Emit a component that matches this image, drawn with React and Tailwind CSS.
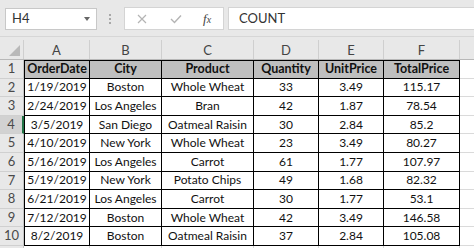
import React from "react";

const colW = ["w-[66px]", "w-[72px]", "w-[92px]", "w-[65px]", "w-[65px]", "w-[76px]"];
const letters = ["A", "B", "C", "D", "E", "F"];

const header = ["OrderDate", "City", "Product", "Quantity", "UnitPrice", "TotalPrice"];

const rows = [
  ["1/19/2019", "Boston", "Whole Wheat", "33", "3.49", "115.17"],
  ["2/24/2019", "Los Angeles", "Bran", "42", "1.87", "78.54"],
  ["3/5/2019", "San Diego", "Oatmeal Raisin", "30", "2.84", "85.2"],
  ["4/10/2019", "New York", "Whole Wheat", "23", "3.49", "80.27"],
  ["5/16/2019", "Los Angeles", "Carrot", "61", "1.77", "107.97"],
  ["5/19/2019", "New York", "Potato Chips", "49", "1.68", "82.32"],
  ["6/21/2019", "Los Angeles", "Carrot", "30", "1.77", "53.1"],
  ["7/12/2019", "Boston", "Whole Wheat", "42", "3.49", "146.58"],
  ["8/2/2019", "Boston", "Oatmeal Raisin", "37", "2.84", "105.08"],
];

const Toolbar = () => (
  <div className="h-[37px] bg-[#e8e8e8] flex items-start pt-[7px] border-b border-[#d6d6d6]">
    {/* name box */}
    <div className="ml-[5px] mt-[1px] w-[92px] h-[22px] bg-white border border-[#c8c8c8] flex items-center justify-between pl-[6px] pr-[6px]">
      <span className="text-[13px] text-[#333]">H4</span>
      <span className="w-0 h-0 border-l-[3.5px] border-r-[3.5px] border-t-[4px] border-l-transparent border-r-transparent border-t-[#666]" />
    </div>
    {/* grip dots */}
    <div className="ml-[12px] mt-[7px] flex flex-col gap-[2px]">
      <span className="w-[2px] h-[2px] bg-[#a8a8a8]" />
      <span className="w-[2px] h-[2px] bg-[#a8a8a8]" />
      <span className="w-[2px] h-[2px] bg-[#a8a8a8]" />
    </div>
    {/* x check fx */}
    <div className="ml-[13px] w-[100px] h-[23px] bg-white border border-[#d4d4d4] flex items-center">
      <svg className="ml-[12px]" width="10" height="10" viewBox="0 0 10 10">
        <path d="M1 1 L9 9 M9 1 L1 9" stroke="#b4b4b4" strokeWidth="1.2" fill="none" />
      </svg>
      <svg className="ml-[23px]" width="12" height="10" viewBox="0 0 12 10">
        <path d="M1 5 L4.5 8.5 L11 1.5" stroke="#b4b4b4" strokeWidth="1.4" fill="none" />
      </svg>
      <span className="ml-[21px] text-[13px] italic text-[#444] font-['Liberation_Serif',serif] leading-none">
        f<span className="text-[10px]">x</span>
      </span>
    </div>
    {/* formula */}
    <div className="ml-[4px] flex-1 h-[23px] bg-white border border-[#d4d4d4] border-r-0 flex items-center pl-[10px]">
      <span className="text-[13px] text-[#333]">COUNT</span>
    </div>
  </div>
);

const ColHeaders = () => (
  <div className="h-[20px] bg-[#e8e8e8] flex border-b border-[#b8b8b8]">
    <div className="w-[24px] h-full relative border-r border-[#cfcfcf]">
      <svg className="absolute right-[3px] bottom-[3px]" width="11" height="11" viewBox="0 0 11 11">
        <path d="M11 0 L11 11 L0 11 Z" fill="#b9b9b9" />
      </svg>
    </div>
    {letters.map((l, i) => (
      <div key={l} className={`${colW[i]} h-full flex items-center justify-center pt-[2px] text-[13px] text-[#444] border-r border-[#cfcfcf]`}>
        {l}
      </div>
    ))}
    <div className="flex-1 h-full" />
  </div>
);

const RowHeader = ({ n, active }) => (
  <div
    className={`w-[24px] h-full flex items-center justify-center text-[13px] border-b border-[#d0d0d0] ${
      active ? "bg-[#d2d2d2] text-[#4a4a4a] border-r-2 border-r-[#217346]" : "bg-[#e8e8e8] text-[#4a4a4a] border-r border-r-[#c4c4c4]"
    }`}
  >
    {n}
  </div>
);

const App = () => {
  return (
    <div className="w-[474px] h-[248px] overflow-hidden bg-white font-['Lato',sans-serif]">
      <Toolbar />
      <div className="h-[3px] bg-[#e8e8e8]" />
      <ColHeaders />
      {/* row 1: table header */}
      <div className="h-[18.6px] flex">
        <RowHeader n={1} />
        {header.map((h, i) => (
          <div
            key={h}
            className={`${colW[i]} h-full bg-[#bfbfbf] border-t border-b border-r border-black ${i === 0 ? "border-l" : ""} flex items-center justify-center text-[12.5px] font-bold text-[#111]`}
          >
            {h}
          </div>
        ))}
        <div className="flex-1 h-full border-b border-[#dadada]" />
      </div>
      {rows.map((r, ri) => (
        <div key={ri} className="h-[18.6px] flex">
          <RowHeader n={ri + 2} active={ri === 2} />
          {r.map((c, i) => (
            <div
              key={i}
              className={`${colW[i]} h-full border-b border-r border-black ${i === 0 ? "border-l" : ""} flex items-center justify-center text-[12px] text-[#111]`}
            >
              {c}
            </div>
          ))}
          <div className="flex-1 h-full border-b border-[#dadada]" />
        </div>
      ))}
      <div className="h-[18.6px] flex">
        <RowHeader n={11} />
        {colW.map((w, i) => (
          <div key={i} className={`${w} h-full border-r border-[#dadada]`} />
        ))}
      </div>
    </div>
  );
};

export default App;
